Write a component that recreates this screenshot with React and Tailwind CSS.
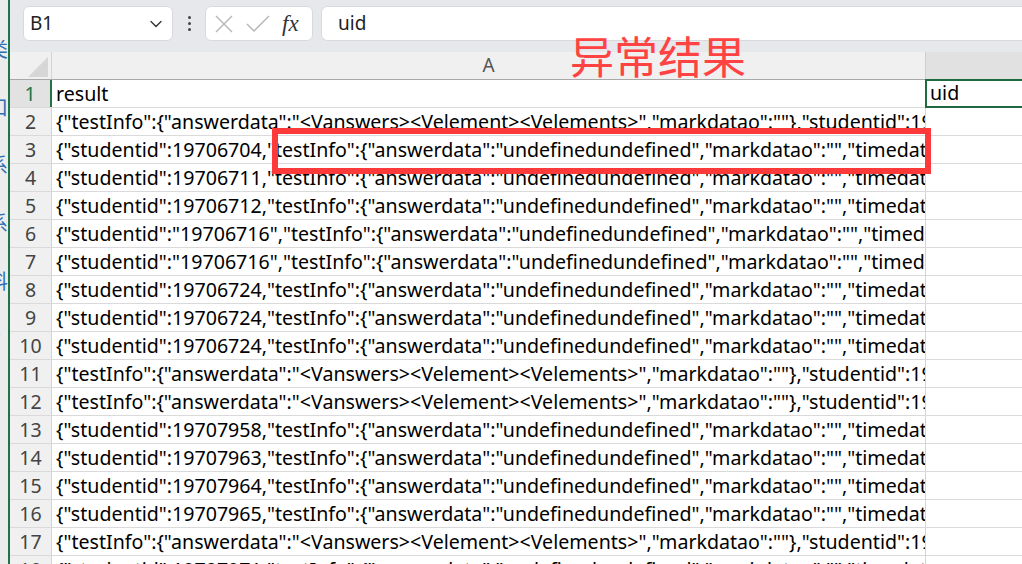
import { ChevronDown } from 'lucide-react';

const ROWS = [
  'result',
  '{"testInfo":{"answerdata":"<Vanswers><Velement><Velements>","markdatao":""},"studentid":19706703}',
  '{"studentid":19706704,"testInfo":{"answerdata":"undefinedundefined","markdatao":"","timedata":""}}',
  '{"studentid":19706711,"testInfo":{"answerdata":"undefinedundefined","markdatao":"","timedata":""}}',
  '{"studentid":19706712,"testInfo":{"answerdata":"undefinedundefined","markdatao":"","timedata":""}}',
  '{"studentid":"19706716","testInfo":{"answerdata":"undefinedundefined","markdatao":"","timedata":""}}',
  '{"studentid":"19706716","testInfo":{"answerdata":"undefinedundefined","markdatao":"","timedata":""}}',
  '{"studentid":19706724,"testInfo":{"answerdata":"undefinedundefined","markdatao":"","timedata":""}}',
  '{"studentid":19706724,"testInfo":{"answerdata":"undefinedundefined","markdatao":"","timedata":""}}',
  '{"studentid":19706724,"testInfo":{"answerdata":"undefinedundefined","markdatao":"","timedata":""}}',
  '{"testInfo":{"answerdata":"<Vanswers><Velement><Velements>","markdatao":""},"studentid":19707950}',
  '{"testInfo":{"answerdata":"<Vanswers><Velement><Velements>","markdatao":""},"studentid":19707951}',
  '{"studentid":19707958,"testInfo":{"answerdata":"undefinedundefined","markdatao":"","timedata":""}}',
  '{"studentid":19707963,"testInfo":{"answerdata":"undefinedundefined","markdatao":"","timedata":""}}',
  '{"studentid":19707964,"testInfo":{"answerdata":"undefinedundefined","markdatao":"","timedata":""}}',
  '{"studentid":19707965,"testInfo":{"answerdata":"undefinedundefined","markdatao":"","timedata":""}}',
  '{"testInfo":{"answerdata":"<Vanswers><Velement><Velements>","markdatao":""},"studentid":19707970}',
  '{"studentid":19707971,"testInfo":{"answerdata":"undefinedundefined","markdatao":"","timedata":""}}',
];

const cellFont = { fontFamily: '"Noto Sans", "Noto Sans CJK SC", sans-serif' };

function Toolbar() {
  return (
    <div className="h-[52px] shrink-0 bg-[#e6e8eb] flex items-start pt-[6px] pl-[13px]">
      {/* name box */}
      <div className="w-[150px] h-[35px] bg-white rounded-[6px] border border-[#d8dade] flex items-center justify-between pl-[6px] pr-[6px]">
        <span className="text-[19px] text-[#222]">B1</span>
        <ChevronDown size={20} strokeWidth={1.6} className="text-[#333]" />
      </div>
      <div className="w-[32px] h-[35px] flex flex-col items-center justify-center gap-[3px]">
        <span className="w-[3px] h-[3px] bg-[#444] rounded-full" />
        <span className="w-[3px] h-[3px] bg-[#444] rounded-full" />
        <span className="w-[3px] h-[3px] bg-[#444] rounded-full" />
      </div>
      {/* formula buttons */}
      <div className="w-[108px] h-[35px] bg-white rounded-[6px] border border-[#d8dade] flex items-center pl-[8px] gap-[12px]">
        <svg width="20" height="20" viewBox="0 0 20 20" fill="none" stroke="#b5b5b5" strokeWidth="1.4">
          <path d="M2 2 L18 18 M18 2 L2 18" />
        </svg>
        <svg width="24" height="18" viewBox="0 0 24 18" fill="none" stroke="#b5b5b5" strokeWidth="1.4">
          <path d="M1 9 L8 16 L23 1" />
        </svg>
        <span className="text-[23px] italic text-[#333] leading-none" style={{ fontFamily: '"Liberation Serif", serif' }}>
          fx
        </span>
      </div>
      <div className="ml-[8px] flex-1 h-[35px] bg-white rounded-l-[6px] border border-r-0 border-[#d8dade] flex items-center pl-[16px]">
        <span className="text-[19px] text-[#222]">uid</span>
      </div>
    </div>
  );
}

function ColumnHeader() {
  return (
    <div className="h-[28px] shrink-0 flex border-b border-[#a8a8a8] bg-[#f0f0f0]">
      <div className="w-[42px] shrink-0 border-r border-[#d4d4d4] relative">
        <svg className="absolute right-[3px] bottom-[2px]" width="20" height="20" viewBox="0 0 20 20">
          <path d="M20 0 L20 20 L0 20 Z" fill="#d6d6d6" />
        </svg>
      </div>
      <div className="w-[874px] shrink-0 border-r border-[#cfcfcf] flex items-center justify-center text-[19px] text-[#555]">
        A
      </div>
      <div className="flex-1 bg-[#e1e1e1]" />
    </div>
  );
}

function Row({ n, text }) {
  const first = n === 1;
  return (
    <div className="h-[28px] shrink-0 flex border-b border-[#dadada]">
      <div
        className={`w-[42px] shrink-0 flex items-center justify-center text-[19.5px] ${
          first ? 'bg-[#e2e2e2] text-[#217346] border-r-2 border-[#217346]' : 'bg-[#f0f0f0] text-[#444] border-r border-[#d4d4d4]'
        }`}
      >
        {n}
      </div>
      <div className="w-[874px] shrink-0 border-r border-[#d4d4d4] overflow-hidden whitespace-nowrap pl-[4px] text-[19.6px] text-black leading-[27px]">
        {text}
      </div>
      <div className="flex-1 relative">
        {first && (
          <div className="absolute -top-[1px] -left-[1px] right-0 -bottom-[1px] border-2 border-r-0 border-[#1e6b41] pl-[3px] text-[19.6px] leading-[24px] text-black">
            uid
          </div>
        )}
      </div>
    </div>
  );
}

export default function App() {
  return (
    <div className="w-[1022px] h-[564px] overflow-hidden flex bg-white relative" style={cellFont}>
      {/* sliver of the window behind */}
      <div className="w-[8px] shrink-0 bg-[#ececec] overflow-hidden relative">
        <div className="absolute -left-[12px] top-[40px] flex flex-col gap-[38px] text-[20px] text-[#2f6db5] leading-none">
          <span>类</span>
          <span>口</span>
          <span>系</span>
          <span>系</span>
          <span>料</span>
          <span>C</span>
        </div>
      </div>
      <div className="w-[2px] shrink-0 bg-[#217346]" />
      <div className="flex-1 flex flex-col overflow-hidden">
        <Toolbar />
        <ColumnHeader />
        {ROWS.map((t, i) => (
          <Row key={i} n={i + 1} text={t} />
        ))}
      </div>

      {/* annotation */}
      <div
        className="absolute left-[570px] top-[33px] text-[44px] leading-none text-[#ff4242]"
        style={{ fontFamily: '"Noto Sans CJK SC", sans-serif' }}
      >
        异常结果
      </div>
      <div className="absolute left-[272px] top-[128px] w-[659px] h-[46px] border-[6px] border-[#fc3a3a]" />
    </div>
  );
}
